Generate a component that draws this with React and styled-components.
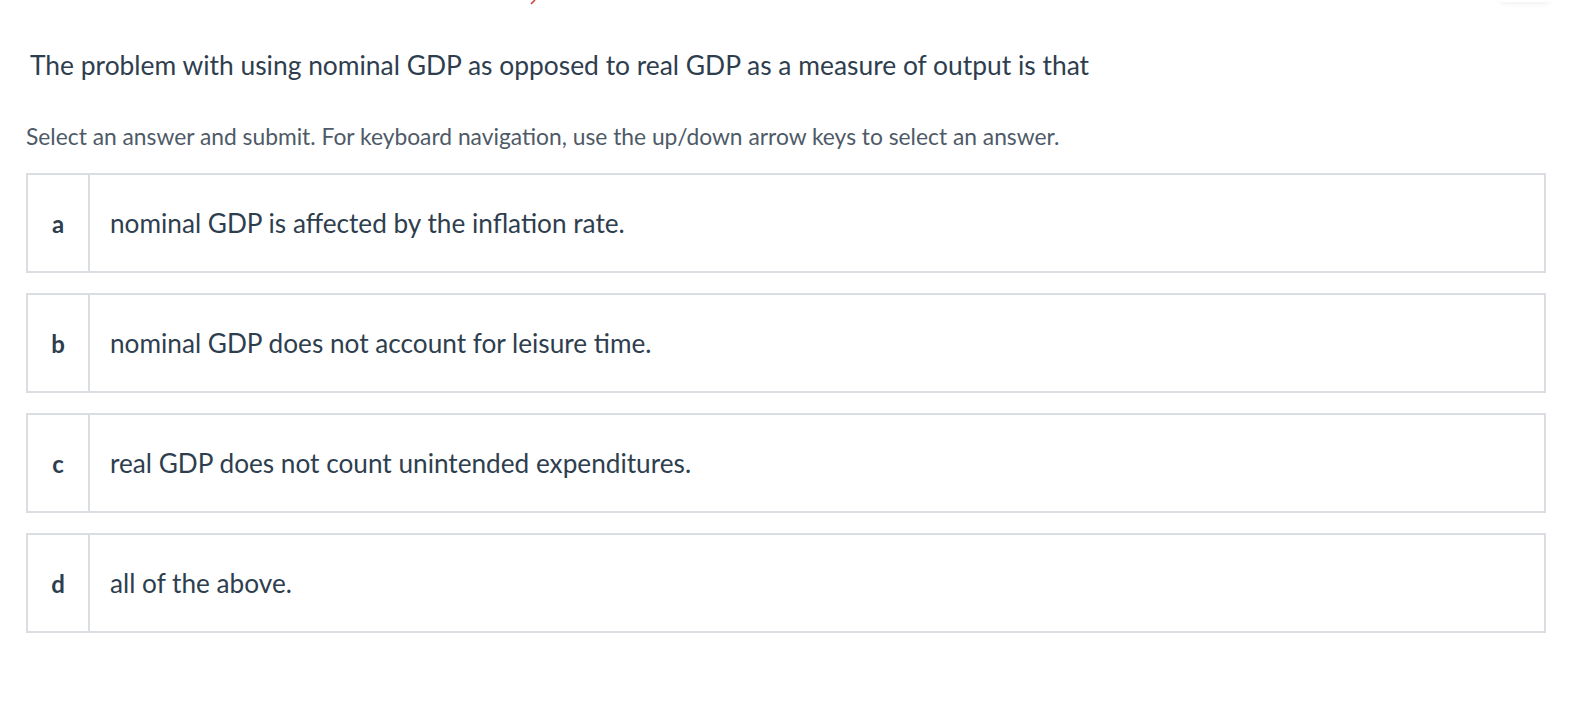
import React from "react";
import styled, { createGlobalStyle } from "styled-components";

const Global = createGlobalStyle`
  html, body { margin: 0; padding: 0; background: #ffffff; overflow: hidden; }
  body { font-family: "Lato", "Noto Sans", sans-serif; color: #2e3e4e; }
`;

const Page = styled.div`
  width: 100%;
  height: 714px;
  overflow: hidden;
  display: flex;
  flex-direction: column;
  padding: 0 32px 0 26px;
  box-sizing: border-box;
`;

const TopStrip = styled.div`
  height: 8px;
  display: flex;
  align-items: flex-start;
`;

const RedTick = styled.svg`
  margin-left: 504px;
  display: block;
`;

const Shadow = styled.div`
  margin-left: auto;
  margin-right: -4px;
  width: 50px;
  height: 2px;
  border-radius: 0 0 6px 6px;
  box-shadow: 0 1px 5px rgba(0, 0, 0, 0.12);
  background: #fff;
`;

const Question = styled.h1`
  margin: 40px 0 0 4px;
  font-size: 26.4px;
  font-weight: 400;
  line-height: 34px;
  color: #2e3e4e;
`;

const Instructions = styled.p`
  margin: 40px 0 0 0;
  font-size: 22.8px;
  font-weight: 400;
  line-height: 28px;
  color: #4e5a67;
`;

const Options = styled.div`
  margin-top: 23px;
  display: flex;
  flex-direction: column;
  gap: 20px;
`;

const Option = styled.div`
  display: flex;
  height: 100px;
  box-sizing: border-box;
  border: 2px solid #dadee2;
  background: #fff;
  cursor: pointer;
`;

const Letter = styled.div`
  width: 60px;
  flex: none;
  display: flex;
  align-items: center;
  justify-content: center;
  border-right: 2px solid #dadee2;
  font-size: 24px;
  font-weight: 700;
  color: #2e3e4e;
`;

const Text = styled.div`
  display: flex;
  align-items: center;
  padding-left: 20px;
  font-size: 26.2px;
  color: #2e3e4e;
`;

const options = [
  ["a", "nominal GDP is affected by the inflation rate."],
  ["b", "nominal GDP does not account for leisure time."],
  ["c", "real GDP does not count unintended expenditures."],
  ["d", "all of the above."],
];

export default function App() {
  return (
    <>
      <Global />
      <Page>
        <TopStrip>
          <RedTick width="6" height="5" viewBox="0 0 6 5">
            <path d="M1 4 L5 0" stroke="#d04040" strokeWidth="1.6" />
          </RedTick>
          <Shadow />
        </TopStrip>
        <Question>
          The problem with using nominal GDP as opposed to real GDP as a measure of output is that
        </Question>
        <Instructions>
          Select an answer and submit. For keyboard navigation, use the up/down arrow keys to select an answer.
        </Instructions>
        <Options role="radiogroup">
          {options.map(([l, t]) => (
            <Option key={l} role="radio" aria-checked="false">
              <Letter>{l}</Letter>
              <Text>{t}</Text>
            </Option>
          ))}
        </Options>
      </Page>
    </>
  );
}
